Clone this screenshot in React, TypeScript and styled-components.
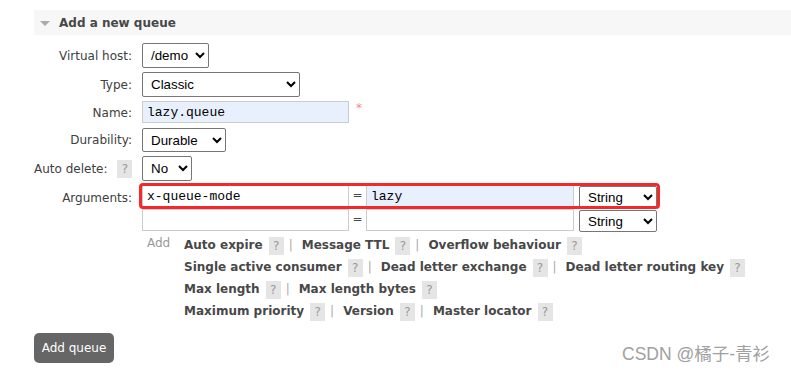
import { createGlobalStyle, styled } from 'styled-components';

const GlobalStyle = createGlobalStyle`
  html, body {
    margin: 0;
    padding: 0;
    background: #ffffff;
  }
  body {
    font-family: 'DejaVu Sans', Verdana, sans-serif;
    font-size: 12px;
    color: #484848;
  }
`;

type widthProps = {
  $w: number;
};

type fillProps = {
  $filled?: boolean;
};

const linkRows = [
  ['Auto expire', 'Message TTL', 'Overflow behaviour'],
  ['Single active consumer', 'Dead letter exchange', 'Dead letter routing key'],
  ['Max length', 'Max length bytes'],
  ['Maximum priority', 'Version', 'Master locator'],
];

const App = () => {
  return (
    <Page>
      <GlobalStyle />
      <SectionHeader>
        <Triangle />
        <SectionTitle>Add a new queue</SectionTitle>
      </SectionHeader>
      <Form>
        <Row $h={25}>
          <Label>Virtual host:</Label>
          <Select $w={67} defaultValue="/demo">
            <option>/demo</option>
          </Select>
        </Row>
        <Row $h={25}>
          <Label>Type:</Label>
          <Select $w={158} defaultValue="Classic">
            <option>Classic</option>
          </Select>
        </Row>
        <Row $h={23}>
          <Label>Name:</Label>
          <NameCell>
            <TextInput $w={207} $filled defaultValue="lazy.queue" />
            <Required>*</Required>
          </NameCell>
        </Row>
        <Row $h={24}>
          <Label>Durability:</Label>
          <Select $w={84} defaultValue="Durable">
            <option>Durable</option>
          </Select>
        </Row>
        <Row $h={25}>
          <Label>
            Auto delete: <Help>?</Help>
          </Label>
          <Select $w={50} defaultValue="No">
            <option>No</option>
          </Select>
        </Row>
        <ArgsRow>
          <ArgsLabel>Arguments:</ArgsLabel>
          <ArgsList>
            <ArgLine>
              <TextInput $w={207} defaultValue="x-queue-mode" />
              <Equals>=</Equals>
              <TextInput $w={208} $filled defaultValue="lazy" />
              <SmallSelect defaultValue="String">
                <option>String</option>
              </SmallSelect>
              <Highlight />
            </ArgLine>
            <ArgLine>
              <TextInput $w={207} defaultValue="" />
              <Equals>=</Equals>
              <TextInput $w={208} defaultValue="" />
              <SmallSelect defaultValue="String">
                <option>String</option>
              </SmallSelect>
            </ArgLine>
            <AddBlock>
              <AddWord>Add</AddWord>
              <Links>
                {linkRows.map((row, i) => (
                  <LinkLine key={i}>
                    {row.map((item, j) => (
                      <span key={item}>
                        <LinkText>{item}</LinkText>
                        <Help>?</Help>
                        {j < row.length - 1 && <Sep>|</Sep>}
                      </span>
                    ))}
                  </LinkLine>
                ))}
              </Links>
            </AddBlock>
          </ArgsList>
        </ArgsRow>
      </Form>
      <SubmitButton type="button">Add queue</SubmitButton>
      <Watermark>CSDN @橘子-青衫</Watermark>
    </Page>
  );
};

export default App;

const Page = styled.div`
  position: relative;
  width: 791px;
  height: 374px;
  padding: 10px 0 0 34px;
  box-sizing: border-box;
  overflow: hidden;
`;

const SectionHeader = styled.div`
  display: flex;
  align-items: center;
  height: 25px;
  background-color: #f7f7f7;
  padding-left: 6px;
`;

const Triangle = styled.span`
  width: 0;
  height: 0;
  border-left: 5px solid transparent;
  border-right: 5px solid transparent;
  border-top: 5px solid #aaaaaa;
  margin-right: 9px;
  margin-top: 1px;
`;

const SectionTitle = styled.h2`
  margin: 0;
  font-size: 12px;
  font-weight: 700;
  color: #484848;
`;

const Form = styled.div`
  display: flex;
  flex-direction: column;
  gap: 4px;
  margin-top: 8px;
`;

const Row = styled.div<{ $h: number }>`
  display: grid;
  grid-template-columns: 98px 1fr;
  column-gap: 10px;
  align-items: center;
  height: ${(props) => props.$h}px;
`;

const Label = styled.label`
  text-align: right;
  color: #404040;
  white-space: nowrap;
`;

const Select = styled.select<widthProps>`
  width: ${(props) => props.$w}px;
  height: 100%;
  font-family: 'Liberation Sans', Arial, sans-serif;
  font-size: 13.33px;
  color: #000000;
  background-color: #ffffff;
  border: 1px solid #767676;
  border-radius: 2px;
  padding: 0 4px;
`;

const SmallSelect = styled(Select).attrs({ $w: 78 })`
  height: 22px;
  margin-left: 5px;
  margin-top: 1px;
`;

const NameCell = styled.div`
  display: flex;
  align-items: flex-start;
  height: 100%;
`;

const TextInput = styled.input<widthProps & fillProps>`
  width: ${(props) => props.$w}px;
  height: 22px;
  box-sizing: border-box;
  padding: 0 4px;
  font-family: 'Liberation Mono', 'Courier New', monospace;
  font-size: 13px;
  color: #000000;
  border: 1px solid #cccccc;
  background-color: ${(props) => (props.$filled ? '#e8f0fe' : '#ffffff')};
  outline: none;
`;

const Required = styled.span`
  color: #f08c8c;
  font-size: 12px;
  margin-left: 7px;
  line-height: 14px;
`;

const Help = styled.span`
  display: inline-block;
  width: 15px;
  height: 18px;
  line-height: 18px;
  margin-left: 6px;
  text-align: center;
  vertical-align: middle;
  font-weight: 400;
  color: #999999;
  background-color: #e5e5e5;
`;

const ArgsRow = styled.div`
  display: grid;
  grid-template-columns: 98px 1fr;
  column-gap: 10px;
`;

const ArgsLabel = styled(Label)`
  padding-top: 6px;
`;

const ArgsList = styled.div`
  display: flex;
  flex-direction: column;
  gap: 2px;
`;

const ArgLine = styled.div`
  position: relative;
  display: flex;
  align-items: flex-start;
  height: 22px;
`;

const Equals = styled.span`
  width: 17px;
  text-align: center;
  line-height: 20px;
  color: #484848;
`;

const Highlight = styled.div`
  position: absolute;
  left: -3px;
  top: -2px;
  width: 521px;
  height: 26px;
  box-sizing: border-box;
  border: 3px solid #f42a2a;
  border-radius: 4px;
  pointer-events: none;
`;

const AddBlock = styled.div`
  display: grid;
  grid-template-columns: 42px 1fr;
  margin-top: 1px;
`;

const AddWord = styled.span`
  padding-left: 5px;
  line-height: 18px;
  color: #999999;
`;

const Links = styled.div`
  display: flex;
  flex-direction: column;
`;

const LinkLine = styled.div`
  height: 22px;
  line-height: 22px;
  white-space: nowrap;
`;

const LinkText = styled.span`
  font-weight: 700;
  color: #484848;
`;

const Sep = styled.span`
  display: inline-block;
  margin: 0 9px 0 5px;
  color: #aaaaaa;
`;

const SubmitButton = styled.button`
  display: block;
  margin-top: 11px;
  width: 80px;
  height: 30px;
  padding: 0;
  font-family: 'DejaVu Sans', Verdana, sans-serif;
  font-size: 12px;
  color: #ffffff;
  background-color: #666666;
  border: none;
  border-radius: 5px;
`;

const Watermark = styled.span`
  position: absolute;
  left: 622px;
  top: 343px;
  font-family: 'Liberation Sans', 'Noto Sans CJK SC', sans-serif;
  font-size: 17.5px;
  line-height: 22px;
  color: #a0a0a0;
  white-space: nowrap;
`;
